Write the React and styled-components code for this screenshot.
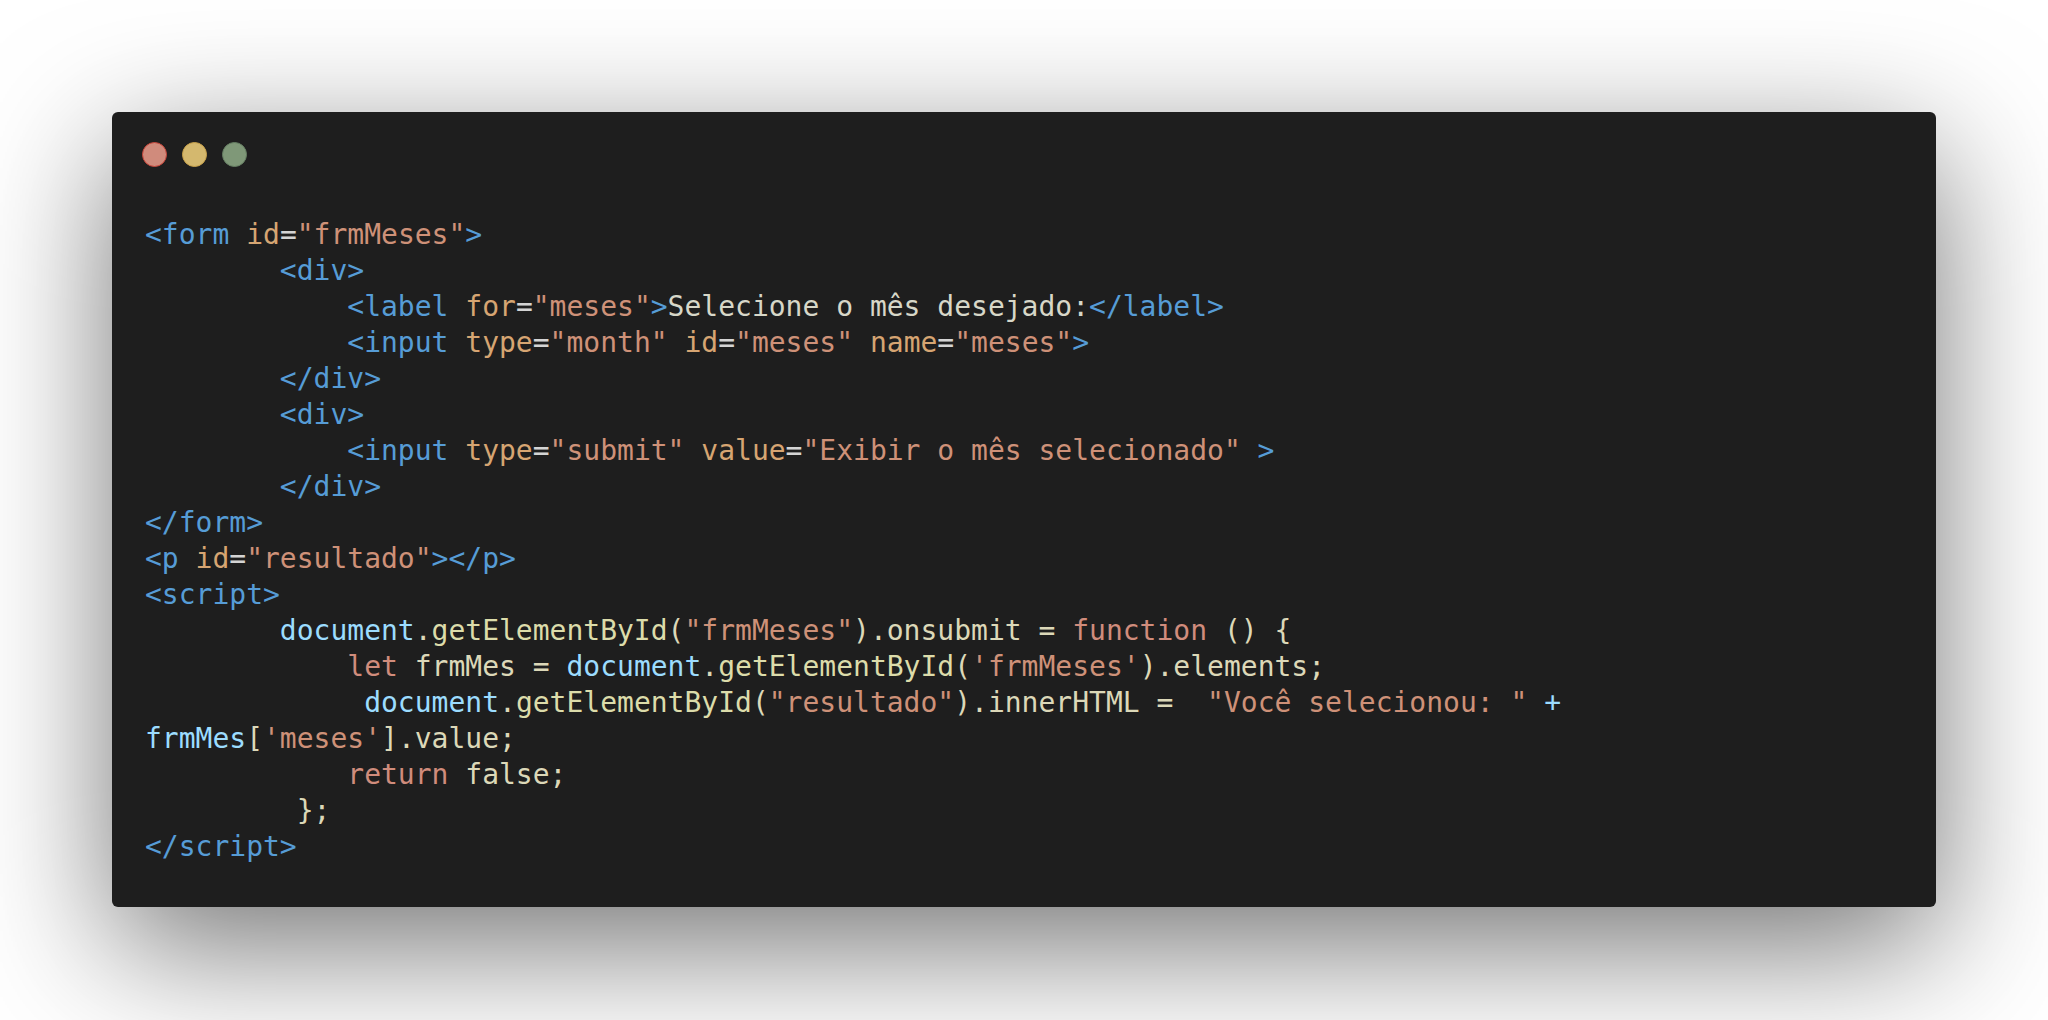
import React from "react";
import styled, { createGlobalStyle } from "styled-components";

const Global = createGlobalStyle`
  html, body { margin: 0; padding: 0; background: #ffffff; }
  body { width: 2048px; height: 1020px; overflow: hidden; }
`;

const Page = styled.div`
  box-sizing: border-box;
  width: 2048px;
  height: 1020px;
  padding: 112px 112px 113px 112px;
  background: #ffffff;
`;

const Window = styled.div`
  box-sizing: border-box;
  height: 100%;
  background: #1e1e1e;
  border-radius: 6px;
  box-shadow: 0 40px 136px rgba(0, 0, 0, 0.55);
  padding: 30px 30px 0 30px;
  display: flex;
  flex-direction: column;
`;

const Controls = styled.div`
  display: flex;
  gap: 15px;
  height: 25px;
`;

const Dot = styled.span`
  box-sizing: border-box;
  width: 25px;
  height: 25px;
  border-radius: 50%;
  background: ${(p) => p.$fill};
  border: 1px solid ${(p) => p.$edge};
`;

const Code = styled.pre`
  margin: 50px 0 0 0;
  padding: 0 0 0 3px;
  font-family: "DejaVu Sans Mono", "Liberation Mono", monospace;
  font-size: 28px;
  line-height: 36px;
  color: #d4d4d4;
  white-space: pre;
`;

const colors = {
  tag: "#569cd6",
  attr: "#d6a572",
  eq: "#d4d4d4",
  str: "#ce9178",
  text: "#d7d7c8",
  var: "#9cdcfe",
  fn: "#dcdcaa",
  kw: "#d08c7c",
  id: "#dcd8b8",
};

const Tok = styled.span`
  color: ${(p) => colors[p.$k] || "#d4d4d4"};
`;

const t = (k, s) => [k, s];

const lines = [
  [t("tag", "<form"), t("attr", " id"), t("eq", "="), t("str", '"frmMeses"'), t("tag", ">")],
  [t("tag", "        <div>")],
  [
    t("tag", "            <label"),
    t("attr", " for"),
    t("eq", "="),
    t("str", '"meses"'),
    t("tag", ">"),
    t("text", "Selecione o mês desejado:"),
    t("tag", "</label>"),
  ],
  [
    t("tag", "            <input"),
    t("attr", " type"),
    t("eq", "="),
    t("str", '"month"'),
    t("attr", " id"),
    t("eq", "="),
    t("str", '"meses"'),
    t("attr", " name"),
    t("eq", "="),
    t("str", '"meses"'),
    t("tag", ">"),
  ],
  [t("tag", "        </div>")],
  [t("tag", "        <div>")],
  [
    t("tag", "            <input"),
    t("attr", " type"),
    t("eq", "="),
    t("str", '"submit"'),
    t("attr", " value"),
    t("eq", "="),
    t("str", '"Exibir o mês selecionado"'),
    t("tag", " >"),
  ],
  [t("tag", "        </div>")],
  [t("tag", "</form>")],
  [t("tag", "<p"), t("attr", " id"), t("eq", "="), t("str", '"resultado"'), t("tag", "></p>")],
  [t("tag", "<script>")],
  [
    t("var", "        document"),
    t("id", "."),
    t("fn", "getElementById"),
    t("id", "("),
    t("str", '"frmMeses"'),
    t("id", ").onsubmit = "),
    t("kw", "function"),
    t("id", " () {"),
  ],
  [
    t("kw", "            let"),
    t("id", " frmMes = "),
    t("var", "document"),
    t("id", "."),
    t("fn", "getElementById"),
    t("id", "("),
    t("str", "'frmMeses'"),
    t("id", ").elements;"),
  ],
  [
    t("var", "             document"),
    t("id", "."),
    t("fn", "getElementById"),
    t("id", "("),
    t("str", '"resultado"'),
    t("id", ").innerHTML =  "),
    t("str", '"Você selecionou: "'),
    t("var", " +"),
  ],
  [t("var", "frmMes"), t("id", "["), t("str", "'meses'"), t("id", "].value;")],
  [t("kw", "            return"), t("id", " false;")],
  [t("id", "         };")],
  [t("tag", "</script>")],
];

export default function App() {
  return (
    <>
      <Global />
      <Page>
        <Window>
          <Controls>
            <Dot $fill="#d08b7c" $edge="#c8453a" />
            <Dot $fill="#d4b86e" $edge="#c9a24a" />
            <Dot $fill="#7f9878" $edge="#667f63" />
          </Controls>
          <Code>
            {lines.map((ln, i) => (
              <React.Fragment key={i}>
                {ln.map(([k, s], j) => (
                  <Tok key={j} $k={k}>
                    {s}
                  </Tok>
                ))}
                {i < lines.length - 1 ? "\n" : ""}
              </React.Fragment>
            ))}
          </Code>
        </Window>
      </Page>
    </>
  );
}
